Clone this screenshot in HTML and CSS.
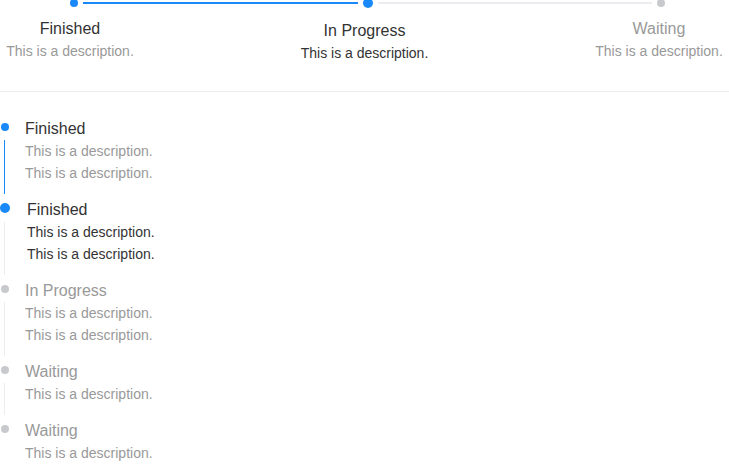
FILE: index.html
```html
<!DOCTYPE html>
<html>
<head>
<meta charset="utf-8" />
<title>Steps</title>
<link rel="stylesheet" href="styles.css">
</head>
<body>

<!-- 横向步骤条 -->
<div class="steps_h">
    <div class="dots">
        <span class="dot finish"></span>
        <span class="line finish"></span>
        <span class="dot big finish"></span>
        <span class="line"></span>
        <span class="dot"></span>
    </div>
    <div class="labels">
        <div class="label">
            <div class="title">Finished</div>
            <div class="desc">This is a description.</div>
        </div>
        <div class="label active">
            <div class="title">In Progress</div>
            <div class="desc">This is a description.</div>
        </div>
        <div class="label wait">
            <div class="title">Waiting</div>
            <div class="desc">This is a description.</div>
        </div>
    </div>
</div>

<!-- 纵向步骤条 -->
<div class="steps_v">
    <div class="item">
        <div class="rail">
            <span class="dot finish"></span>
            <span class="line finish"></span>
        </div>
        <div class="body">
            <div class="title">Finished</div>
            <div class="desc">This is a description.</div>
            <div class="desc">This is a description.</div>
        </div>
    </div>
    <div class="item active">
        <div class="rail">
            <span class="dot big finish"></span>
            <span class="line"></span>
        </div>
        <div class="body">
            <div class="title">Finished</div>
            <div class="desc">This is a description.</div>
            <div class="desc">This is a description.</div>
        </div>
    </div>
    <div class="item wait">
        <div class="rail">
            <span class="dot"></span>
            <span class="line"></span>
        </div>
        <div class="body">
            <div class="title">In Progress</div>
            <div class="desc">This is a description.</div>
            <div class="desc">This is a description.</div>
        </div>
    </div>
    <div class="item wait">
        <div class="rail">
            <span class="dot"></span>
            <span class="line"></span>
        </div>
        <div class="body">
            <div class="title">Waiting</div>
            <div class="desc">This is a description.</div>
        </div>
    </div>
    <div class="item wait">
        <div class="rail">
            <span class="dot"></span>
        </div>
        <div class="body">
            <div class="title">Waiting</div>
            <div class="desc">This is a description.</div>
        </div>
    </div>
</div>

</body>
</html>
```

FILE: styles.css
```css
body { margin: 0; background: #fff; font-family: "Liberation Sans", Arial, sans-serif; color: #333; }
.title { font-size: 16px; line-height: 22px; }
.desc { font-size: 14px; line-height: 22px; color: #999; }

.dot { display: block; width: 8px; height: 8px; border-radius: 50%; background: #c8c9cc; flex: none; }
.dot.big { width: 10px; height: 10px; }
.dot.finish { background: #1989fa; }

/* 横向 */
.steps_h { margin-top: -2px; padding-bottom: 27px; border-bottom: 1px solid #ebedf0; }
.steps_h .dots { display: flex; align-items: center; height: 10px; padding: 0 64px 0 70px; }
.steps_h .line { flex: 1; height: 2px; margin: 0 5px; background: #ebedf0; }
.steps_h .line.finish { background: #1989fa; }
.steps_h .labels { display: flex; justify-content: space-between; margin-top: 10px; }
.steps_h .label { width: 140px; text-align: center; }
.steps_h .label.active { padding-top: 2px; }
.steps_h .label.active .desc { color: #333; }
.steps_h .label.wait .title { color: #999; }

/* 纵向 */
.steps_v { padding-top: 26px; }
.steps_v .item { display: flex; }
.steps_v .rail { width: 10px; display: flex; flex-direction: column; flex: none; }
.steps_v .rail .dot { margin: 5px 0 0 1px; }
.steps_v .rail .dot.big { margin: 4px 0 0 0; }
.steps_v .rail .line { flex: 1; width: 1px; margin: 9px 0 5px 4px; background: #ebedf0; }
.steps_v .rail .line.finish { background: #1989fa; }
.steps_v .body { padding: 0 0 15px 15px; }
.steps_v .item.active .body { padding-left: 17px; }
.steps_v .item.active .desc { color: #333; }
.steps_v .item.wait .title { color: #999; }
```
